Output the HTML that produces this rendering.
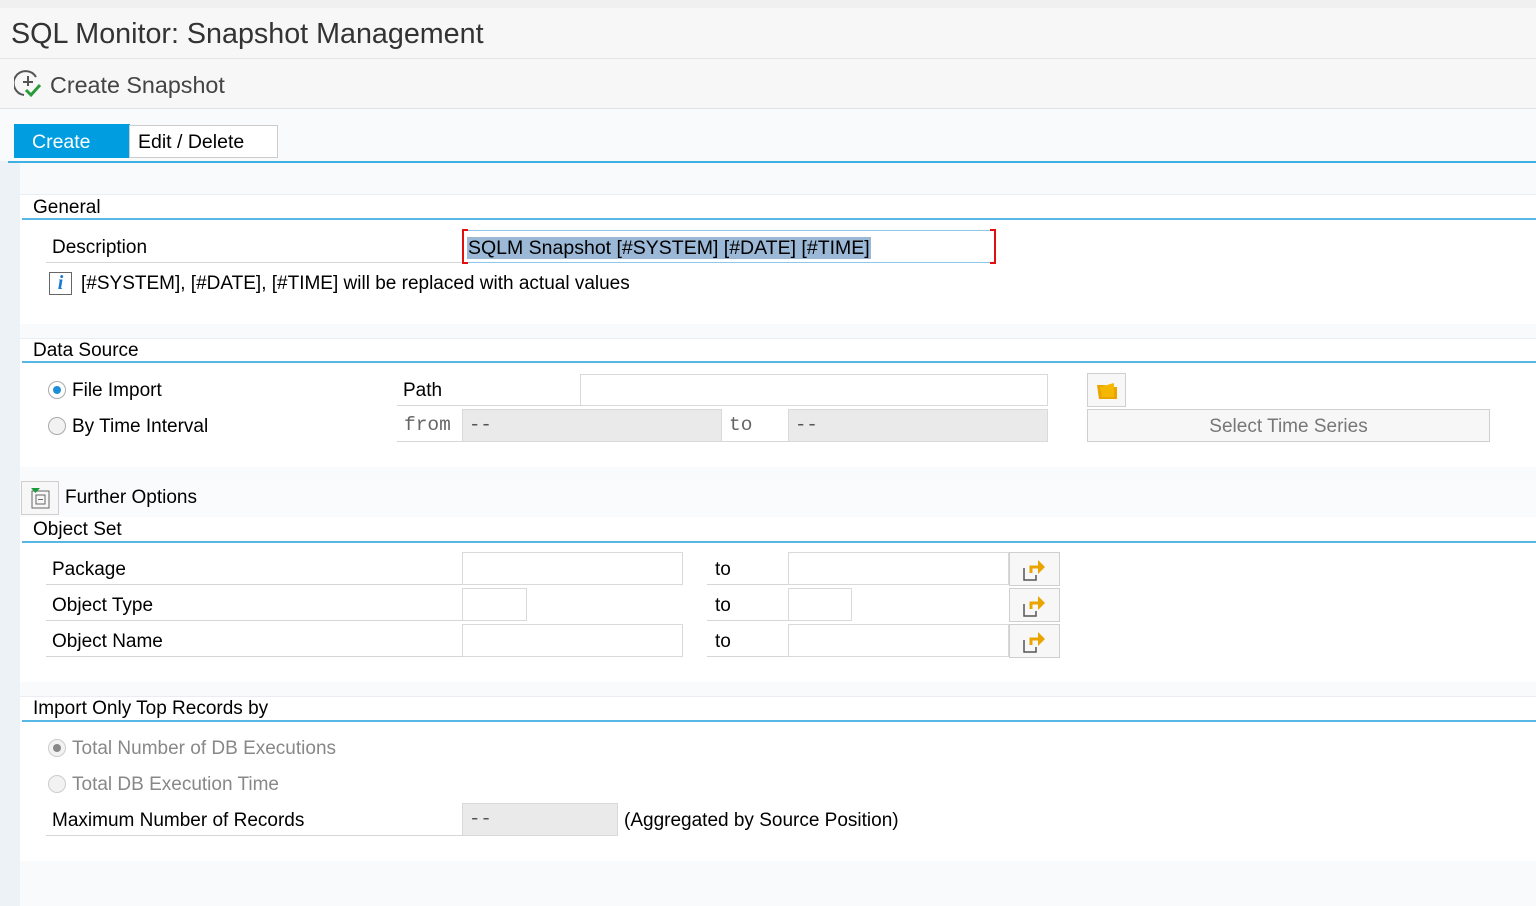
<!DOCTYPE html>
<html><head><meta charset="utf-8"><style>
*{margin:0;padding:0;box-sizing:border-box}
body{width:1536px;height:906px;overflow:hidden;position:relative;background:#f3f7fa;font-family:"Liberation Sans",sans-serif;color:#000;font-size:19px}
.a{position:absolute;white-space:nowrap}
.t{line-height:20px}
.panel{position:absolute;left:20px;right:0;background:#fff;border-top:1px solid #eaeef2}
.hl{position:absolute;left:22px;right:0;height:2px;background:#57b8e6}
.ul{position:absolute;height:1px;background:#d6d6d6}
.inp{position:absolute;background:#fff;border:1px solid #d9d9d9}
.gr{position:absolute;background:#eaeaea;border:1px solid #d9d9d9}
.btn{position:absolute;background:#f7f7f7;border:1px solid #cfcfcf}
.rad{position:absolute;width:18px;height:18px;border-radius:50%;border:1px solid #aaa;background:#f2f2f2}
</style></head><body>
<div class="a" style="left:0;top:0;width:1536px;height:8px;background:#f0f0f0"></div>
<div class="a" style="left:0;top:8px;width:1536px;height:100px;background:#f7f7f7"></div>
<div class="a" style="left:0;top:58px;width:1536px;height:1px;background:#e4e4e4"></div>
<div class="a" style="left:0;top:108px;width:1536px;height:1px;background:#e4e4e4"></div>
<div class="a t" style="left:11px;top:18px;font-size:28.7px;line-height:32px;color:#333">SQL Monitor: Snapshot Management</div>
<svg class="a" style="left:14px;top:69px" width="30" height="30" viewBox="0 0 30 30"><path d="M22 8 A12 12 0 1 0 10 26" fill="none" stroke="#555" stroke-width="2"/><path d="M14 7v10M9 13h10" stroke="#555" stroke-width="2" fill="none"/><path d="M12 21l5 5 9-10" stroke="#2a9a3a" stroke-width="3" fill="none"/></svg>
<div class="a t" style="left:50px;top:72px;font-size:23.3px;line-height:26px;color:#444">Create Snapshot</div>
<div class="a" style="left:0;top:109px;width:1536px;height:797px;background:#f8fafc"></div>
<div class="a" style="left:0;top:161px;width:20px;height:745px;background:#edf2f7"></div>
<div class="a" style="left:14px;top:124px;width:116px;height:34px;background:#009de0;color:#fff;font-size:19.5px;line-height:36px;padding-left:18px">Create</div>
<div class="a" style="left:129px;top:125px;width:149px;height:33px;background:#fff;border:1px solid #ccc;font-size:19.5px;line-height:33px;padding-left:8px">Edit / Delete</div>
<div class="a" style="left:8px;top:161px;width:1528px;height:2px;background:#3fb0e3"></div>

<div class="panel" style="top:194px;height:130px"></div>
<div class="a t" style="left:33px;top:198px">General</div>
<div class="hl" style="top:218px"></div>
<div class="a t" style="left:52px;top:238px">Description</div>
<div class="ul" style="left:46px;top:262px;width:416px"></div>
<div class="a" style="left:463px;top:230px;width:533px;height:33px;border:1px solid #8cc8ea;background:#fff"></div>
<div class="a" style="left:462px;top:229px;width:6px;height:35px;border:2px solid #e01010;border-right:none"></div>
<div class="a" style="left:990px;top:229px;width:6px;height:35px;border:2px solid #e01010;border-left:none"></div>
<div class="a t" style="left:467px;top:237px;background:#9bb8d6;padding:0 1px;height:22px;line-height:22px;font-size:19.5px">SQLM Snapshot [#SYSTEM] [#DATE] [#TIME]</div>
<div class="a" style="left:49px;top:272px;width:23px;height:23px;border:1px solid #666;background:#fff;color:#1a7ad4;font-style:italic;font-family:'Liberation Serif',serif;font-size:20px;text-align:center;line-height:21px;font-weight:bold">i</div>
<div class="a t" style="left:81px;top:274px">[#SYSTEM], [#DATE], [#TIME] will be replaced with actual values</div>

<div class="panel" style="top:338px;height:129px"></div>
<div class="a t" style="left:33px;top:341px">Data Source</div>
<div class="hl" style="top:361px"></div>
<div class="rad" style="left:48px;top:381px;background:#fff"><div style="position:absolute;left:4px;top:4px;width:8px;height:8px;border-radius:50%;background:#1c8fd8"></div></div>
<div class="a t" style="left:72px;top:381px">File Import</div>
<div class="rad" style="left:48px;top:417px"></div>
<div class="a t" style="left:72px;top:417px">By Time Interval</div>
<div class="a t" style="left:403px;top:381px">Path</div>
<div class="ul" style="left:397px;top:405px;width:183px"></div>
<div class="inp" style="left:580px;top:374px;width:468px;height:32px"></div>
<div class="btn" style="left:1087px;top:373px;width:39px;height:34px"><svg style="position:absolute;left:7px;top:7px" width="24" height="20" viewBox="0 0 24 20"><path d="M2 4h8l2 2h10v12H4z" fill="#e9a400"/><path d="M5 6l14-4v14H7z" fill="#f5b800"/></svg></div>
<div class="a t" style="left:404px;top:415px;font-family:'Liberation Mono',monospace;font-size:19.5px;color:#666">from</div>
<div class="ul" style="left:397px;top:441px;width:65px"></div>
<div class="gr" style="left:462px;top:409px;width:260px;height:33px"></div>
<div class="a t" style="left:469px;top:415px;font-family:'Liberation Mono',monospace;color:#555">--</div>
<div class="a t" style="left:729px;top:415px;font-family:'Liberation Mono',monospace;font-size:19.5px;color:#666">to</div>
<div class="ul" style="left:722px;top:441px;width:66px"></div>
<div class="gr" style="left:788px;top:409px;width:260px;height:33px"></div>
<div class="a t" style="left:795px;top:415px;font-family:'Liberation Mono',monospace;color:#555">--</div>
<div class="btn" style="left:1087px;top:409px;width:403px;height:33px;text-align:center;line-height:33px;color:#777">Select Time Series</div>

<div class="a" style="left:20px;top:481px;width:1516px;height:36px;background:#fafbfc"></div>
<div class="btn" style="left:21px;top:481px;width:38px;height:34px"><svg style="position:absolute;left:7px;top:5px" width="24" height="24" viewBox="0 0 24 24"><rect x="3" y="4" width="17" height="17" fill="none" stroke="#666"/><rect x="7" y="8" width="9" height="9" fill="none" stroke="#666"/><path d="M9 12.5h5" stroke="#666"/><path d="M2 1h9l-4.5 5z" fill="#1a9a3a"/></svg></div>
<div class="a t" style="left:65px;top:488px">Further Options</div>
<div class="panel" style="top:517px;height:165px;border-top:none"></div>
<div class="a t" style="left:33px;top:520px">Object Set</div>
<div class="hl" style="top:541px"></div>

<div class="a t" style="left:52px;top:560px">Package</div>
<div class="a t" style="left:52px;top:596px">Object Type</div>
<div class="a t" style="left:52px;top:632px">Object Name</div>
<div class="ul" style="left:46px;top:584px;width:416px"></div>
<div class="ul" style="left:46px;top:620px;width:416px"></div>
<div class="ul" style="left:46px;top:656px;width:416px"></div>
<div class="inp" style="left:462px;top:552px;width:221px;height:33px"></div>
<div class="inp" style="left:462px;top:588px;width:65px;height:33px"></div>
<div class="inp" style="left:462px;top:624px;width:221px;height:33px"></div>
<div class="a t" style="left:715px;top:560px">to</div>
<div class="a t" style="left:715px;top:596px">to</div>
<div class="a t" style="left:715px;top:632px">to</div>
<div class="ul" style="left:707px;top:584px;width:81px"></div>
<div class="ul" style="left:707px;top:620px;width:81px"></div>
<div class="ul" style="left:707px;top:656px;width:81px"></div>
<div class="inp" style="left:788px;top:552px;width:221px;height:33px"></div>
<div class="inp" style="left:788px;top:588px;width:64px;height:33px"></div>
<div class="inp" style="left:788px;top:624px;width:221px;height:33px"></div>
<div class="btn" style="left:1009px;top:552px;width:51px;height:34px"><svg style="position:absolute;left:12px;top:5px" width="26" height="24" viewBox="0 0 26 24"><path d="M2 10v12h12v-5" fill="none" stroke="#555" stroke-width="1.5"/><path d="M9 15V9h9" fill="none" stroke="#e9a400" stroke-width="3"/><path d="M16 2l7 7-7 7z" fill="#e9a400"/></svg></div>
<div class="btn" style="left:1009px;top:588px;width:51px;height:34px"><svg style="position:absolute;left:12px;top:5px" width="26" height="24" viewBox="0 0 26 24"><path d="M2 10v12h12v-5" fill="none" stroke="#555" stroke-width="1.5"/><path d="M9 15V9h9" fill="none" stroke="#e9a400" stroke-width="3"/><path d="M16 2l7 7-7 7z" fill="#e9a400"/></svg></div>
<div class="btn" style="left:1009px;top:624px;width:51px;height:34px"><svg style="position:absolute;left:12px;top:5px" width="26" height="24" viewBox="0 0 26 24"><path d="M2 10v12h12v-5" fill="none" stroke="#555" stroke-width="1.5"/><path d="M9 15V9h9" fill="none" stroke="#e9a400" stroke-width="3"/><path d="M16 2l7 7-7 7z" fill="#e9a400"/></svg></div>

<div class="panel" style="top:696px;height:165px"></div>
<div class="a t" style="left:33px;top:699px">Import Only Top Records by</div>
<div class="hl" style="top:720px"></div>
<div class="rad" style="left:48px;top:739px;border-color:#ccc"><div style="position:absolute;left:4px;top:4px;width:8px;height:8px;border-radius:50%;background:#888"></div></div>
<div class="a t" style="left:72px;top:739px;color:#888">Total Number of DB Executions</div>
<div class="rad" style="left:48px;top:775px;border-color:#ccc"></div>
<div class="a t" style="left:72px;top:775px;color:#888">Total DB Execution Time</div>
<div class="a t" style="left:52px;top:811px">Maximum Number of Records</div>
<div class="ul" style="left:46px;top:835px;width:416px"></div>
<div class="gr" style="left:462px;top:803px;width:156px;height:33px"></div>
<div class="a t" style="left:469px;top:809px;font-family:'Liberation Mono',monospace;color:#555">--</div>
<div class="a t" style="left:624px;top:811px">(Aggregated by Source Position)</div>
</body></html>
